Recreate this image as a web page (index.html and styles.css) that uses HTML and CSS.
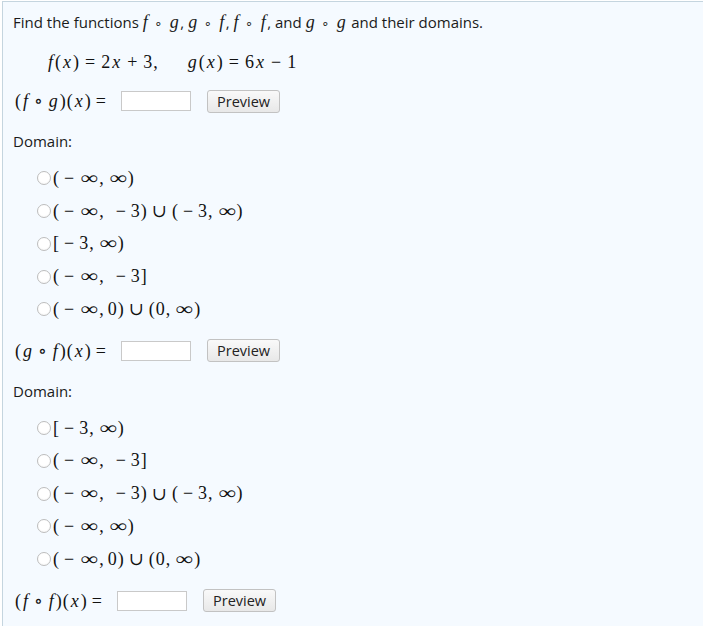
FILE: index.html
```html
<!DOCTYPE html>
<html>
<head>
<meta charset="utf-8">
<link rel="stylesheet" href="styles.css">
</head>
<body>
<div class="panel">
  <p class="intro">Find the functions <span class="m"><i>f</i><span class="bin">∘</span><i>g</i></span>, <span class="m"><i>g</i><span class="bin">∘</span><i>f</i></span>, <span class="m"><i>f</i><span class="bin">∘</span><i>f</i></span>, and <span class="m"><i>g</i><span class="bin">∘</span><i>g</i></span> and their domains.</p>
  <div class="given math"><i>f</i>(<i>x</i>)<span class="rel">=</span>2<i>x</i><span class="bin">+</span>3<span class="c">,</span><span class="quad"></span><i>g</i>(<i>x</i>)<span class="rel">=</span>6<i>x</i><span class="bin">−</span>1</div>

  <div class="answer">
    <span class="math lhs">(<i>f</i><span class="bin">∘</span><i>g</i>)(<i>x</i>)<span class="rel">=</span></span>
    <span class="box"></span>
    <span class="btn">Preview</span>
  </div>
  <div class="label">Domain:</div>
  <ul class="opts math">
    <li><span class="radio"></span>(<span class="bin">−</span><span class="inf">∞</span><span class="c">,</span><span class="inf">∞</span>)</li>
    <li><span class="radio"></span>(<span class="bin">−</span><span class="inf">∞</span><span class="c">,</span><span class="sp"></span><span class="bin">−</span>3)<span class="bin">∪</span>(<span class="bin">−</span>3<span class="c">,</span><span class="inf">∞</span>)</li>
    <li><span class="radio"></span>[<span class="bin">−</span>3<span class="c">,</span><span class="inf">∞</span>)</li>
    <li><span class="radio"></span>(<span class="bin">−</span><span class="inf">∞</span><span class="c">,</span><span class="sp"></span><span class="bin">−</span>3]</li>
    <li><span class="radio"></span>(<span class="bin">−</span><span class="inf">∞</span><span class="c">,</span>0)<span class="bin">∪</span>(0<span class="c">,</span><span class="inf">∞</span>)</li>
  </ul>

  <div class="answer after">
    <span class="math lhs">(<i>g</i><span class="bin">∘</span><i>f</i>)(<i>x</i>)<span class="rel">=</span></span>
    <span class="box"></span>
    <span class="btn">Preview</span>
  </div>
  <div class="label">Domain:</div>
  <ul class="opts math">
    <li><span class="radio"></span>[<span class="bin">−</span>3<span class="c">,</span><span class="inf">∞</span>)</li>
    <li><span class="radio"></span>(<span class="bin">−</span><span class="inf">∞</span><span class="c">,</span><span class="sp"></span><span class="bin">−</span>3]</li>
    <li><span class="radio"></span>(<span class="bin">−</span><span class="inf">∞</span><span class="c">,</span><span class="sp"></span><span class="bin">−</span>3)<span class="bin">∪</span>(<span class="bin">−</span>3<span class="c">,</span><span class="inf">∞</span>)</li>
    <li><span class="radio"></span>(<span class="bin">−</span><span class="inf">∞</span><span class="c">,</span><span class="inf">∞</span>)</li>
    <li><span class="radio"></span>(<span class="bin">−</span><span class="inf">∞</span><span class="c">,</span>0)<span class="bin">∪</span>(0<span class="c">,</span><span class="inf">∞</span>)</li>
  </ul>

  <div class="answer after">
    <span class="math lhs">(<i>f</i><span class="bin">∘</span><i>f</i>)(<i>x</i>)<span class="rel">=</span></span>
    <span class="box"></span>
    <span class="btn">Preview</span>
  </div>
</div>
</body>
</html>
```
FILE: styles.css
```css
html, body {
  margin: 0;
  padding: 0;
  background: #ffffff;
}
body {
  font-family: "Open Sans", "Noto Sans", sans-serif;
  font-size: 15px;
  color: #1a1a1a;
}
.panel {
  margin: 1px 0 0 2px;
  border-top: 1px solid #c5d5df;
  border-left: 1px solid #c5d5df;
  background: #f5faff;
  padding: 0 0 20px 10px;
  height: 640px;
  box-sizing: border-box;
}
.intro {
  margin: 0;
  padding-top: 10px;
  line-height: 20px;
}
.m {
  font-family: "Liberation Serif", serif;
  font-size: 18px;
  letter-spacing: 1.5px;
}
.m .bin {
  font-family: "DejaVu Sans", sans-serif;
  font-size: 13px;
  margin: 0 6px 0 5px;
}
i {
  font-style: italic;
  font-family: "Liberation Serif", serif;
}
.math {
  font-family: "Liberation Serif", "DejaVu Serif", serif;
  font-size: 18px;
  letter-spacing: 1px;
  color: #111;
}
.math i {
  padding: 0 1px;
}
.math .bin {
  margin: 0 4px;
}
.c {
  margin-right: 3px;
}
.rel {
  margin: 0 5px 0 4px;
}
.given .bin {
  margin: 0 5px;
}
.given .rel {
  margin: 0 5px;
}
.quad {
  display: inline-block;
  width: 25px;
}
.sp {
  display: inline-block;
  width: 4px;
}
.inf {
  display: inline-block;
  width: 18px;
  text-align: center;
  letter-spacing: 0;
  transform: scaleX(1.35);
  margin: 0 1px 0 1px;
}
.given {
  margin-top: 18px;
  padding-left: 34px;
  line-height: 20px;
}
.answer {
  display: flex;
  align-items: center;
  height: 26px;
  margin-top: 16px;
  padding-left: 2px;
}
.answer.after {
  margin-top: 12px;
}
.lhs {
  margin-right: 9px;
}
.box {
  width: 68px;
  height: 18px;
  background: #fff;
  border: 1px solid #c9c9c9;
}
.btn {
  margin-left: 16px;
  height: 23px;
  box-sizing: border-box;
  padding: 0 9px;
  display: flex;
  align-items: center;
  background: linear-gradient(#f9f9f9, #e8e8e8);
  border: 1px solid #c2c2c2;
  border-radius: 3px;
  font-size: 14.5px;
  color: #222;
}
.label {
  margin-top: 17px;
  line-height: 20px;
}
.opts {
  list-style: none;
  margin: 11px 0 0 0;
  padding: 0 0 0 24px;
}
.opts li {
  height: 32.75px;
  display: flex;
  align-items: center;
}
.radio {
  display: inline-block;
  width: 12px;
  height: 12px;
  border: 1px solid #bdbdbd;
  border-radius: 50%;
  background: radial-gradient(circle at 50% 40%, #ffffff 55%, #f0f0f0 100%);
  margin-right: 2px;
}
```
